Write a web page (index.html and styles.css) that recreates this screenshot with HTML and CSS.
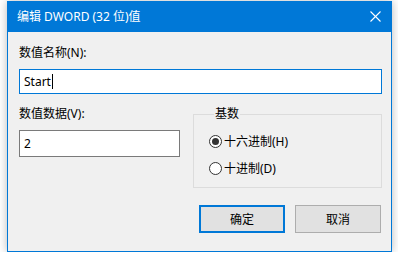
FILE: index.html
```html
<!DOCTYPE html>
<html>

<head>
  <meta charset="utf-8">
  <title>编辑 DWORD (32 位)值</title>

  <link rel="stylesheet" href="styles.css">

</head>

<body>

  <div class="dialog">

    <div class="titlebar">
      <span class="title-text">编辑 DWORD (32 位)值</span>
      <svg class="close-icon" width="11" height="11" viewBox="0 0 11 11">
        <line x1="0.5" y1="0.5" x2="10.5" y2="10.5" stroke="white" stroke-width="1.1"/>
        <line x1="10.5" y1="0.5" x2="0.5" y2="10.5" stroke="white" stroke-width="1.1"/>
      </svg>
    </div>

    <div class="dialog-body">

      <div class="field-label">数值名称(N):</div>
      <div class="text-box name-box"><span class="caret-text">Start</span></div>

      <div class="value-row">

        <div class="value-column">
          <div class="field-label">数值数据(V):</div>
          <div class="text-box data-box">2</div>
        </div>

        <fieldset class="base-group">
          <legend class="base-legend">基数</legend>
          <div class="radio-row">
            <span class="radio-circle checked"></span><span>十六进制(H)</span>
          </div>
          <div class="radio-row">
            <span class="radio-circle"></span><span>十进制(D)</span>
          </div>
        </fieldset>

      </div>

      <div class="button-row">
        <button class="dialog-button default-button" type="button">确定</button>
        <button class="dialog-button" type="button">取消</button>
      </div>

    </div>
  </div>

</body>

</html>
```

FILE: styles.css
```css
body {
  margin: 0;
  background: white;
  font-family: "Noto Sans", "Noto Sans CJK SC", sans-serif;
  font-size: 12px;
  color: black;
}

/* The whole dialog window, with its thin blue frame. */
.dialog {
  box-sizing: border-box;
  width: 385px;
  height: 251px;
  margin: 1px 0 0 7px;
  border: 1px solid #0078d7;
  background: #f0f0f0;
  box-shadow: 0 0 9px rgba(0, 0, 0, 0.28);
}

.titlebar {
  height: 30px;
  background: #0078d7;
  display: flex;
  align-items: center;
  padding: 0 10px 0 9px;
  color: white;
}

.title-text {
  line-height: 16px;
  margin-top: -1px;
}

.close-icon {
  margin-left: auto;
  margin-top: -1px;
}

.dialog-body {
  padding: 13px 9px 0 11px;
}

.field-label {
  line-height: 16px;
}

.text-box {
  box-sizing: border-box;
  background: white;
  margin-top: 8px;
  padding-left: 4px;
  display: flex;
  align-items: center;
}

/* Focused name field has a blue outline. */
.name-box {
  width: 363px;
  height: 25px;
  border: 1px solid #0078d7;
}

.caret-text {
  border-right: 1px solid black;
  line-height: 15px;
  padding-right: 1px;
}

.data-box {
  width: 161px;
  height: 27px;
  border: 1px solid #7a7a7a;
}

.value-row {
  display: flex;
  margin-top: 12px;
}

.value-column {
  width: 161px;
}

.base-group {
  box-sizing: border-box;
  margin: 0 0 0 13px;
  padding: 6px 0 0 15px;
  width: 189px;
  height: 82px;
  border: 1px solid #dcdcdc;
}

.base-legend {
  padding: 0 1px;
  margin-left: 5px;
  line-height: 16px;
}

.radio-row {
  display: flex;
  align-items: center;
  height: 27px;
  line-height: 16px;
}

.radio-circle {
  box-sizing: border-box;
  width: 13px;
  height: 13px;
  border: 1px solid #333333;
  border-radius: 50%;
  background: white;
  margin-right: 2px;
  display: flex;
  align-items: center;
  justify-content: center;
}

.radio-circle.checked::after {
  content: "";
  width: 7px;
  height: 7px;
  border-radius: 50%;
  background: #333333;
}

.button-row {
  display: flex;
  justify-content: flex-end;
  gap: 10px;
  margin-top: 17px;
  padding-right: 1px;
}

.dialog-button {
  box-sizing: border-box;
  width: 86px;
  height: 28px;
  background: #e1e1e1;
  border: 1px solid #adadad;
  font-family: "Noto Sans", "Noto Sans CJK SC", sans-serif;
  font-size: 12px;
  color: black;
  padding: 0;
}

.default-button {
  border: 2px solid #0078d7;
}
```
